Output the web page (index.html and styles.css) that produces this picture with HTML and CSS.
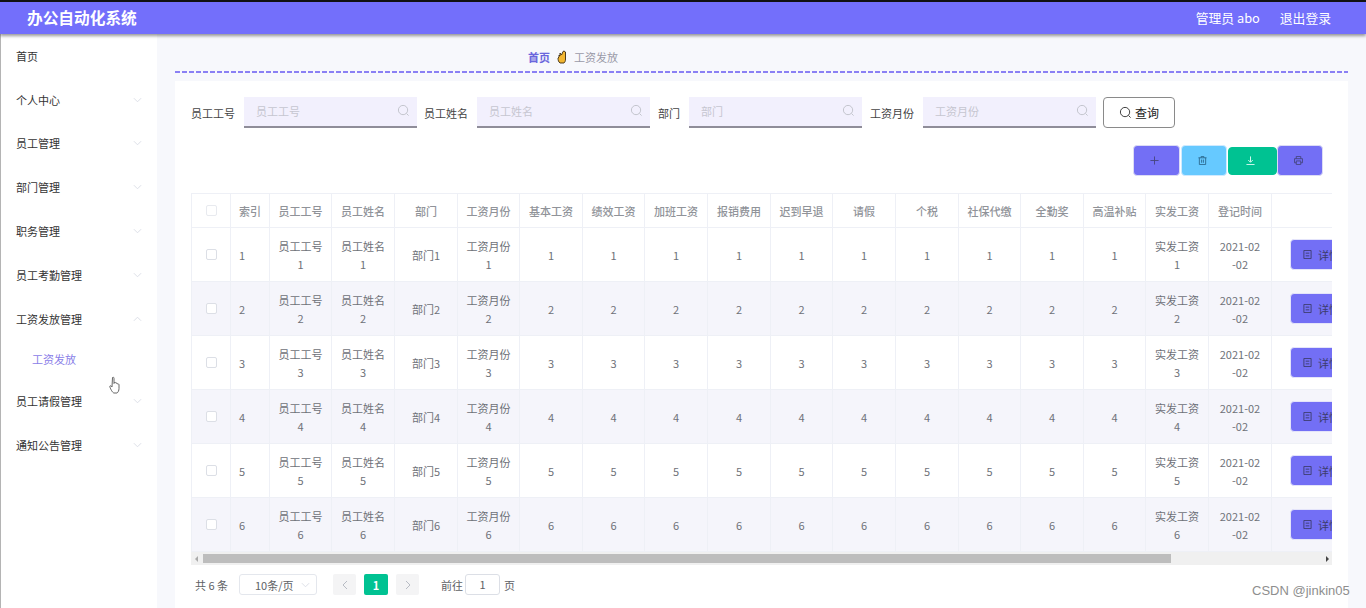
FILE: index.html
```html
<!DOCTYPE html>
<html lang="zh-CN">
<head>
<meta charset="utf-8">
<title>办公自动化系统</title>
<link rel="stylesheet" href="styles.css">
</head>
<body>
<svg class="defs" aria-hidden="true">
  <symbol id="i-search" viewBox="0 0 14 14"><circle cx="6.5" cy="6.5" r="5" fill="none" stroke="currentColor"/><path d="M10.2 10.2l2.3 2.3" fill="none" stroke="currentColor"/></symbol>
  <symbol id="i-down" viewBox="0 0 10 6"><path d="M1 1l4 4 4-4" fill="none" stroke="currentColor"/></symbol>
  <symbol id="i-up" viewBox="0 0 10 6"><path d="M1 5l4-4 4 4" fill="none" stroke="currentColor"/></symbol>
  <symbol id="i-doc" viewBox="0 0 10 10"><path d="M1 .5h8v9H1zM3 3.5h4M3 6.5h4" fill="none" stroke="currentColor"/></symbol>
</svg>
<header class="topbar">
  <div class="brand">办公自动化系统</div>
  <div class="user"><span>管理员 abo</span><span>退出登录</span></div>
</header>
<div class="body">
  <nav class="side">
    <div class="item"><span>首页</span></div>
    <div class="item"><span>个人中心</span><svg class="chev"><use href="#i-down"/></svg></div>
    <div class="item"><span>员工管理</span><svg class="chev"><use href="#i-down"/></svg></div>
    <div class="item"><span>部门管理</span><svg class="chev"><use href="#i-down"/></svg></div>
    <div class="item"><span>职务管理</span><svg class="chev"><use href="#i-down"/></svg></div>
    <div class="item"><span>员工考勤管理</span><svg class="chev"><use href="#i-down"/></svg></div>
    <div class="item"><span>工资发放管理</span><svg class="chev"><use href="#i-up"/></svg></div>
    <div class="sub">工资发放</div>
    <div class="item"><span>员工请假管理</span><svg class="chev"><use href="#i-down"/></svg></div>
    <div class="item"><span>通知公告管理</span><svg class="chev"><use href="#i-down"/></svg></div>
  </nav>
  <main class="main">
    <div class="crumb">
      <b>首页</b>
      <svg class="hand" viewBox="0 0 10 14"><path d="M3 13c-1.500-1-2-3-2-5l1-1V5l1 1V3l1.500 2L6 1.500 7 1l1.500 1v7c0 2-.5 3-1.500 4z" fill="#f2b631" stroke="#3a2a10" stroke-width=".9"/></svg>
      <span>工资发放</span>
    </div>
    <section class="card">
      <div class="search">
        <label class="lab">员工工号</label>
        <div class="inp w1"><span>员工工号</span><svg class="mag"><use href="#i-search"/></svg></div>
        <label class="lab">员工姓名</label>
        <div class="inp w2"><span>员工姓名</span><svg class="mag"><use href="#i-search"/></svg></div>
        <label class="lab l3">部门</label>
        <div class="inp w3"><span>部门</span><svg class="mag"><use href="#i-search"/></svg></div>
        <label class="lab l4">工资月份</label>
        <div class="inp w4"><span>工资月份</span><svg class="mag"><use href="#i-search"/></svg></div>
        <button class="query"><svg class="qi"><use href="#i-search"/></svg>查询</button>
      </div>
      <div class="tools">
        <button class="tb add"><svg viewBox="0 0 10 10"><path d="M5 .5v9M.5 5h9" fill="none" stroke="currentColor"/></svg></button>
        <button class="tb del"><svg viewBox="0 0 10 10"><path d="M.5 2h9M3.500 2V.5h3V2M1.500 2v7.500h7V2M4 4v3.500M6 4v3.500" fill="none" stroke="currentColor"/></svg></button>
        <button class="tb exp"><svg viewBox="0 0 10 10"><path d="M5 .5v6M2.500 4.500L5 7l2.500-2.500M.5 9.500h9" fill="none" stroke="currentColor"/></svg></button>
        <button class="tb prn"><svg viewBox="0 0 10 10"><path d="M2.500 3V.5h5V3M2.500 7.500H.5V3h9v4.500h-2M2.500 5.500h5v4h-5z" fill="none" stroke="currentColor"/></svg></button>
      </div>
      <div class="tablewrap">
        <table class="grid">
          <colgroup>
            <col class="c39"><col class="c39"><col class="c62"><col class="c63"><col class="c63"><col class="c62"><col class="c63"><col class="c62"><col class="c63"><col class="c63"><col class="c62"><col class="c63"><col class="c63"><col class="c62"><col class="c63"><col class="c62"><col class="c63"><col class="c63"><col class="c100">
          </colgroup>
          <thead>
            <tr><th><i class="ck head"></i></th><th class="idx">索引</th><th>员工工号</th><th>员工姓名</th><th>部门</th><th>工资月份</th><th>基本工资</th><th>绩效工资</th><th>加班工资</th><th>报销费用</th><th>迟到早退</th><th>请假</th><th>个税</th><th>社保代缴</th><th>全勤奖</th><th>高温补贴</th><th>实发工资</th><th>登记时间</th><th></th></tr>
          </thead>
          <tbody>
            <tr><td><i class="ck"></i></td><td class="idx">1</td><td>员工工号<br>1</td><td>员工姓名<br>1</td><td>部门1</td><td>工资月份<br>1</td><td>1</td><td>1</td><td>1</td><td>1</td><td>1</td><td>1</td><td>1</td><td>1</td><td>1</td><td>1</td><td>实发工资<br>1</td><td>2021-02<br>-02</td><td class="act"><button class="detail"><svg><use href="#i-doc"/></svg>详情</button></td></tr>
            <tr><td><i class="ck"></i></td><td class="idx">2</td><td>员工工号<br>2</td><td>员工姓名<br>2</td><td>部门2</td><td>工资月份<br>2</td><td>2</td><td>2</td><td>2</td><td>2</td><td>2</td><td>2</td><td>2</td><td>2</td><td>2</td><td>2</td><td>实发工资<br>2</td><td>2021-02<br>-02</td><td class="act"><button class="detail"><svg><use href="#i-doc"/></svg>详情</button></td></tr>
            <tr><td><i class="ck"></i></td><td class="idx">3</td><td>员工工号<br>3</td><td>员工姓名<br>3</td><td>部门3</td><td>工资月份<br>3</td><td>3</td><td>3</td><td>3</td><td>3</td><td>3</td><td>3</td><td>3</td><td>3</td><td>3</td><td>3</td><td>实发工资<br>3</td><td>2021-02<br>-02</td><td class="act"><button class="detail"><svg><use href="#i-doc"/></svg>详情</button></td></tr>
            <tr><td><i class="ck"></i></td><td class="idx">4</td><td>员工工号<br>4</td><td>员工姓名<br>4</td><td>部门4</td><td>工资月份<br>4</td><td>4</td><td>4</td><td>4</td><td>4</td><td>4</td><td>4</td><td>4</td><td>4</td><td>4</td><td>4</td><td>实发工资<br>4</td><td>2021-02<br>-02</td><td class="act"><button class="detail"><svg><use href="#i-doc"/></svg>详情</button></td></tr>
            <tr><td><i class="ck"></i></td><td class="idx">5</td><td>员工工号<br>5</td><td>员工姓名<br>5</td><td>部门5</td><td>工资月份<br>5</td><td>5</td><td>5</td><td>5</td><td>5</td><td>5</td><td>5</td><td>5</td><td>5</td><td>5</td><td>5</td><td>实发工资<br>5</td><td>2021-02<br>-02</td><td class="act"><button class="detail"><svg><use href="#i-doc"/></svg>详情</button></td></tr>
            <tr><td><i class="ck"></i></td><td class="idx">6</td><td>员工工号<br>6</td><td>员工姓名<br>6</td><td>部门6</td><td>工资月份<br>6</td><td>6</td><td>6</td><td>6</td><td>6</td><td>6</td><td>6</td><td>6</td><td>6</td><td>6</td><td>6</td><td>实发工资<br>6</td><td>2021-02<br>-02</td><td class="act"><button class="detail"><svg><use href="#i-doc"/></svg>详情</button></td></tr>
          </tbody>
        </table>
      </div>
      <div class="hscroll">
        <i class="arr-l"></i>
        <div class="thumb"></div>
        <i class="arr-r"></i>
      </div>
      <div class="pager">
        <span class="total">共 6 条</span>
        <div class="size"><span>10条/页</span><svg class="chev"><use href="#i-down"/></svg></div>
        <button class="pg prev"><svg><use href="#i-up"/></svg></button>
        <button class="pg on">1</button>
        <button class="pg next"><svg><use href="#i-up"/></svg></button>
        <span class="goto">前往</span>
        <div class="jump">1</div>
        <span class="unit">页</span>
      </div>
    </section>
  </main>
</div>
<svg class="cursor" viewBox="0 0 12 18"><path d="M3.500 1.500c.8-.8 1.500 0 1.500 1v5l.5-1c1-.4 1.400.2 1.500.8.8-.5 1.500 0 1.500.7.800-.4 1.500.1 1.500 1v3.500c0 2-1 4-2 4.500H5C3.500 17 1 12 .8 10.500c0-1 1.200-1 2.200.5z" fill="#fff" stroke="#555" stroke-width=".9"/></svg>
<div class="mark">CSDN @jinkin05</div>
</body>
</html>
```
FILE: styles.css
```css
* { box-sizing: border-box; }
html, body { margin: 0; height: 608px; overflow: hidden; }
body { font-family: "Noto Sans CJK SC", "Noto Sans", sans-serif; font-size: 11px; color: #303133; background: #f7f8fc; }
.defs { width: 0; height: 0; position: absolute; }
button { font-family: inherit; cursor: pointer; }

.topbar { height: 34px; border-top: 2px solid #111; background: #736ffb; display: flex; align-items: center; justify-content: space-between; padding: 0 35px 0 27px; color: #fff; box-shadow: 0 2px 3px rgba(0,0,0,.4); position: relative; z-index: 2; }
.brand { font-size: 15.7px; font-weight: 700; line-height: 1; }
.user { display: flex; gap: 20px; font-size: 12.8px; line-height: 1; }

.body { display: flex; height: 574px; }
.side { width: 157px; flex: none; background: #fff; border-left: 1px solid #b4b4b4; padding-top: 0; }
.item { height: 43.800px; display: flex; align-items: center; justify-content: space-between; padding: 0 15px 0 15px; color: #333; }
.chev { width: 9px; height: 6px; color: #d8dbe4; }
.sub { height: 37px; margin-bottom: 1.500px; padding-left: 31px; display: flex; align-items: center; color: #8a80e8; }

.main { flex: 1; min-width: 0; padding: 0 18px 0 18px; }
.crumb { height: 39px; background: repeating-linear-gradient(90deg, #8a80f4 0 5px, transparent 5px 7px) left bottom / 100% 2px no-repeat; display: flex; align-items: center; padding-left: 353px; padding-top: 6px; gap: 7px; color: #9a9aa8; }
.crumb b { color: #6a66dd; font-weight: 700; }
.hand { width: 10px; height: 14px; }
.card { margin-top: 8px; background: #fff; padding: 16px 16px 0; height: 540px; }

.search { display: flex; height: 31px; align-items: stretch; }
.lab { width: 53px; flex: none; display: flex; align-items: center; color: #444; white-space: nowrap; }
.lab.l3 { width: 39px; padding-left: 8px; }
.lab.l4 { width: 61px; padding-left: 8px; }
.lab:not(:first-child):not(.l3):not(.l4) { width: 60px; padding-left: 7px; }
.inp { width: 173px; flex: none; background: #f2f0fd; border-bottom: 2px solid #8f8d99; display: flex; align-items: center; justify-content: space-between; padding: 0 7px 2px 12px; color: #c6c6d0; }
.mag { width: 13px; height: 13px; color: #bfc1c9; }
.query { width: 72px; margin-left: 7px; flex: none; background: #fff; border: 1px solid #8a8a8a; border-radius: 4px; font-size: 12px; color: #222; display: flex; align-items: center; justify-content: center; gap: 3px; padding: 0; }
.qi { width: 13px; height: 13px; color: #333; }

.tools { display: flex; justify-content: flex-end; align-items: center; margin-top: 17px; height: 31px; padding-right: 9px; }
.tb { width: 47px; height: 31px; border: 1px solid #dcdcf5; border-radius: 4px; padding: 0 4px 0 0; display: flex; align-items: center; justify-content: center; }
.tb svg { width: 9px; height: 9px; }
.add { background: #736ff5; color: #45457f; }
.del { width: 46px; margin-left: 1px; background: #66c9ff; color: #2b6a8f; border-color: #cfeaff; }
.exp { width: 49px; height: 28px; margin-left: 1px; background: #00c292; color: #e8fff8; border-color: #00c292; }
.prn { width: 46px; background: #736ff5; color: #45457f; }

.tablewrap { width: 1141px; overflow: hidden; margin-top: 17px; border-top: 1px solid #eef0f6; border-left: 1px solid #eef0f6; }
.grid { border-collapse: separate; border-spacing: 0; table-layout: fixed; width: 1179px; }
.c39 { width: 39px; } .c62 { width: 62px; } .c63 { width: 63px; } .c100 { width: 100px; }
.grid th, .grid td { border-right: 1px solid #eef0f6; border-bottom: 1px solid #eef0f6; padding: 0 4px; text-align: center; font-weight: 400; line-height: 18px; }
.grid th { height: 34px; color: #909399; font-weight: 500; background: #fff; }
.grid td { height: 54px; color: #6e7178; background: #fff; }
.grid tbody tr:nth-child(even) td { background: #f5f5fb; }
.grid .idx { text-align: left; padding-left: 8px; }
.ck { display: block; width: 11px; height: 11px; margin: 0 auto; background: #fff; border: 1px solid #dcdfe6; border-radius: 2px; }
.ck.head { border-color: #e8eaef; }
.grid .act { padding: 0 0 0 18px; text-align: left; }
.detail { width: 70px; height: 31px; background: #736ff5; border: 1px solid #e4e4fa; border-radius: 4px; color: #3c3c6c; font-size: 11px; display: flex; align-items: center; justify-content: flex-start; gap: 6px; padding: 0 0 0 12px; }
.detail svg { width: 9px; height: 9px; flex: none; }

.hscroll { width: 1141px; height: 13px; background: #f0f0f0; display: flex; align-items: center; justify-content: space-between; padding: 0 3px 0 4px; }
.thumb { width: 968px; height: 9px; background: #bdbdbd; margin-left: 5px; margin-right: auto; }
.arr-l { width: 0; height: 0; border: 3px solid transparent; border-right: 3px solid #aaa; border-left: 0; }
.arr-r { width: 0; height: 0; border: 3px solid transparent; border-left: 3px solid #444; border-right: 0; }

.pager { display: flex; align-items: center; height: 21px; margin-top: 9px; color: #606266; font-size: 11px; }
.total { margin-left: 4px; width: 44px; }
.size { width: 78px; height: 21px; border: 1px solid #e4e7ed; border-radius: 3px; display: flex; align-items: center; justify-content: space-between; padding: 0 6px 0 15px; }
.pg { width: 23px; height: 21px; border: 0; border-radius: 2px; background: #f4f4f5; color: #b8bcc4; padding: 0; margin-left: 8px; display: flex; align-items: center; justify-content: center; }
.pg svg { width: 10px; height: 8px; }
.prev { margin-left: 16px; }
.prev svg { transform: rotate(-90deg); }
.next svg { transform: rotate(90deg); }
.on { width: 24px; background: #00c292; color: #fff; font-weight: 700; font-size: 11px; }
.goto { margin-left: 22px; }
.jump { width: 35px; height: 21px; margin-left: 2px; border: 1px solid #dcdfe6; border-radius: 3px; text-align: center; line-height: 19px; }
.unit { margin-left: 4px; }

.cursor { position: absolute; left: 109px; top: 376px; width: 12px; height: 18px; z-index: 3; }
.mark { position: absolute; left: 1252px; top: 582px; font-family: "Liberation Sans", sans-serif; font-size: 13px; line-height: 18px; color: #8e8e8e; z-index: 3; }
```
